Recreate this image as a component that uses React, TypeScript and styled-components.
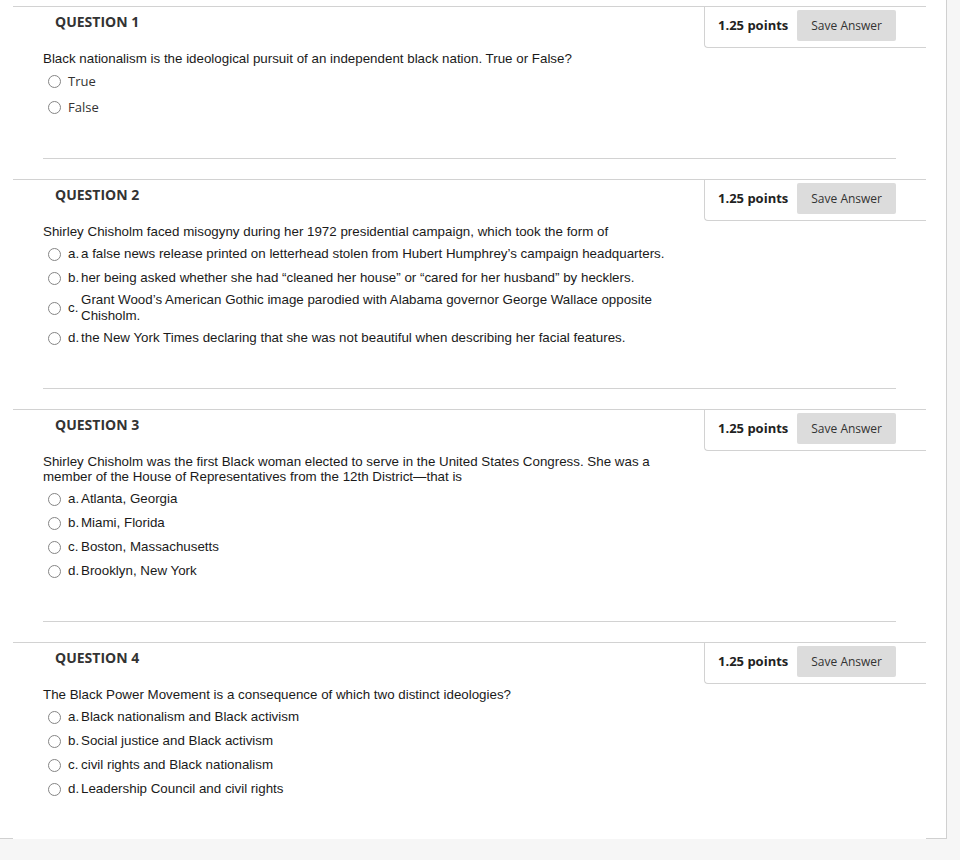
import React from 'react';
import styled, { createGlobalStyle } from 'styled-components';

const Global = createGlobalStyle`
  html, body { margin: 0; padding: 0; background: #f6f6f6; }
  body { font-family: "Liberation Sans", Arial, sans-serif; }
`;

const Frame = styled.div`
  box-sizing: border-box;
  width: 947px;
  height: 839px;
  background: #fff;
  border-right: 1px solid #d0d0d0;
  border-bottom: 1px solid #d0d0d0;
  padding-top: 6px;
`;

const Column = styled.div`
  margin-left: 13px;
  width: 913px;
  background: #fff;
  padding-bottom: 40px;
`;

const Block = styled.section`
  border-top: 1px solid #d2d2d2;
  margin-bottom: 20px;
`;

const Header = styled.div`
  display: flex;
  justify-content: space-between;
  align-items: flex-start;
`;

const Title = styled.h3`
  margin: 0;
  padding: 5px 0 0 42px;
  font: 700 14px/19px "Open Sans", sans-serif;
  color: #333;
`;

const PointsBox = styled.div`
  box-sizing: border-box;
  width: 222px;
  height: 41px;
  display: flex;
  align-items: center;
  padding: 2px 30px 6px 13px;
  border-left: 1px solid #d2d2d2;
  border-bottom: 1px solid #d2d2d2;
  border-bottom-left-radius: 4px;
`;

const Points = styled.span`
  font: 700 13px/18px "Open Sans", sans-serif;
  color: #222;
  margin-right: 9px;
  white-space: nowrap;
`;

const SaveButton = styled.button`
  width: 100px;
  height: 31px;
  border: none;
  border-radius: 2px;
  background: #dcdcdc;
  color: #333;
  font: 400 12px "Open Sans", sans-serif;
  padding: 0;
  cursor: pointer;
`;

const Body = styled.div`
  padding: 3px 30px 0;
`;

const QText = styled.p`
  margin: 0;
  max-width: 640px;
  font: 400 13.35px/15px "Liberation Sans", Arial, sans-serif;
  color: #1a1a1a;
`;

const OptionList = styled.div<{ $gap: number }>`
  margin-top: ${(p) => p.$gap}px;
  display: flex;
  flex-direction: column;
  max-width: 640px;
`;

const OptionRow = styled.label<{ $h: number }>`
  box-sizing: border-box;
  display: flex;
  align-items: center;
  min-height: ${(p) => p.$h}px;
  padding: 2px 0;
`;

const Radio = styled.input`
  appearance: none;
  -webkit-appearance: none;
  box-sizing: border-box;
  width: 13px;
  height: 13px;
  margin: 0 7px 0 5px;
  border: 1px solid #858585;
  border-radius: 50%;
  background: #fff;
  flex-shrink: 0;
`;

const Letter = styled.span`
  width: 13px;
  flex-shrink: 0;
  font: 400 13.35px/16px "Liberation Sans", Arial, sans-serif;
  color: #1a1a1a;
`;

const OptText = styled.span`
  font: 400 13.35px/16px "Liberation Sans", Arial, sans-serif;
  color: #1a1a1a;
`;

const TFText = styled.span`
  font: 400 13px/18px "Open Sans", sans-serif;
  color: #333;
`;

const Separator = styled.div`
  margin-top: 38px;
  border-bottom: 1px solid #d2d2d2;
`;

type Q = {
  n: number;
  text: string;
  tf?: string[];
  options?: string[];
};

const questions: Q[] = [
  {
    n: 1,
    text: 'Black nationalism is the ideological pursuit of an independent black nation. True or False?',
    tf: ['True', 'False'],
  },
  {
    n: 2,
    text: 'Shirley Chisholm faced misogyny during her 1972 presidential campaign, which took the form of',
    options: [
      'a false news release printed on letterhead stolen from Hubert Humphrey\u2019s campaign headquarters.',
      'her being asked whether she had \u201ccleaned her house\u201d or \u201ccared for her husband\u201d by hecklers.',
      'Grant Wood\u2019s American Gothic image parodied with Alabama governor George Wallace opposite Chisholm.',
      'the New York Times declaring that she was not beautiful when describing her facial features.',
    ],
  },
  {
    n: 3,
    text: 'Shirley Chisholm was the first Black woman elected to serve in the United States Congress. She was a member of the House of Representatives from the 12th District\u2014that is',
    options: ['Atlanta, Georgia', 'Miami, Florida', 'Boston, Massachusetts', 'Brooklyn, New York'],
  },
  {
    n: 4,
    text: 'The Black Power Movement is a consequence of which two distinct ideologies?',
    options: [
      'Black nationalism and Black activism',
      'Social justice and Black activism',
      'civil rights and Black nationalism',
      'Leadership Council and civil rights',
    ],
  },
];

const letters = ['a.', 'b.', 'c.', 'd.'];

function Question({ q }: { q: Q }) {
  return (
    <Block>
      <Header>
        <Title>QUESTION {q.n}</Title>
        <PointsBox>
          <Points>1.25 points</Points>
          <SaveButton type="button">Save Answer</SaveButton>
        </PointsBox>
      </Header>
      <Body>
        <QText>{q.text}</QText>
        {q.tf && (
          <OptionList $gap={2}>
            {q.tf.map((t) => (
              <OptionRow key={t} $h={26}>
                <Radio type="radio" name={`q${q.n}`} />
                <TFText>{t}</TFText>
              </OptionRow>
            ))}
          </OptionList>
        )}
        {q.options && (
          <OptionList $gap={3}>
            {q.options.map((t, i) => (
              <OptionRow key={i} $h={24}>
                <Radio type="radio" name={`q${q.n}`} />
                <Letter>{letters[i]}</Letter>
                <OptText>{t}</OptText>
              </OptionRow>
            ))}
          </OptionList>
        )}
        <Separator />
      </Body>
    </Block>
  );
}

export default function App() {
  return (
    <>
      <Global />
      <Frame>
        <Column>
          {questions.map((q) => (
            <Question key={q.n} q={q} />
          ))}
        </Column>
      </Frame>
    </>
  );
}
